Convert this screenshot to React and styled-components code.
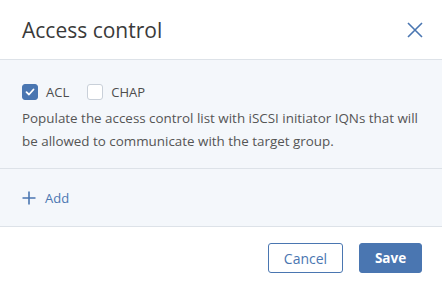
import React from "react";
import styled, { createGlobalStyle } from "styled-components";

const Global = createGlobalStyle`
  html, body { margin: 0; padding: 0; background: #fff; }
  body { font-family: "Open Sans", "Noto Sans", sans-serif; }
  * { box-sizing: border-box; }
`;

const Dialog = styled.div`
  width: 442px;
  height: 285px;
  display: flex;
  flex-direction: column;
  background: #fff;
  color: #4d4d4d;
`;

const Header = styled.div`
  height: 60px;
  display: flex;
  align-items: center;
  justify-content: space-between;
  padding: 0 19px 0 22px;
  border-bottom: 1px solid #dde2e8;
`;

const Title = styled.h1`
  margin: 0;
  font-size: 21px;
  font-weight: 400;
  color: #3a3a3a;
  line-height: 24px;
  margin-top: 1px;
`;

const CloseButton = styled.button`
  border: 0;
  background: none;
  padding: 0;
  width: 16px;
  height: 16px;
  display: flex;
  cursor: pointer;
`;

const Section = styled.div`
  background: #f4f7fb;
  border-bottom: 1px solid #dde2e8;
  padding: ${(p) => p.$pad};
`;

const CheckRow = styled.div`
  display: flex;
  align-items: center;
  gap: 18px;
  height: 16px;
`;

const CheckLabel = styled.label`
  display: flex;
  align-items: center;
  gap: 8px;
  font-size: 13px;
  color: #4d4d4d;
`;

const Box = styled.span`
  width: 16px;
  height: 16px;
  border-radius: 3px;
  display: flex;
  align-items: center;
  justify-content: center;
  background: ${(p) => (p.$checked ? "#4a76b1" : "#fff")};
  border: 1px solid ${(p) => (p.$checked ? "#4a76b1" : "#c9d0d9")};
`;

const Description = styled.p`
  margin: 7px 0 0;
  font-size: 13.4px;
  line-height: 23px;
  color: #555;
`;

const AddButton = styled.button`
  border: 0;
  background: none;
  padding: 0;
  display: flex;
  align-items: center;
  gap: 9px;
  font-family: inherit;
  font-size: 13px;
  color: #4a76b1;
  height: 57px;
`;

const Footer = styled.div`
  display: flex;
  justify-content: flex-end;
  gap: 16px;
  padding: 16px 20px 0;
`;

const Button = styled.button`
  height: 30px;
  width: ${(p) => p.$w}px;
  border-radius: 3px;
  font-family: inherit;
  font-size: ${(p) => (p.$primary ? 13.5 : 14)}px;
  font-weight: ${(p) => (p.$primary ? 700 : 400)};
  color: ${(p) => (p.$primary ? "#fff" : "#4a76b1")};
  background: ${(p) => (p.$primary ? "#4a76b1" : "#fff")};
  border: 1px solid #4a76b1;
  padding: 0;
  cursor: pointer;
`;

function Check({ checked, label }) {
  return (
    <CheckLabel>
      <Box $checked={checked}>
        {checked && (
          <svg width="10" height="8" viewBox="0 0 10 8">
            <path d="M1.5 4.2 L4 6.5 L8.5 1.5" fill="none" stroke="#fff" strokeWidth="1.8" strokeLinecap="round" strokeLinejoin="round" />
          </svg>
        )}
      </Box>
      {label}
    </CheckLabel>
  );
}

export default function App() {
  return (
    <>
      <Global />
      <Dialog>
        <Header>
          <Title>Access control</Title>
          <CloseButton aria-label="Close">
            <svg width="16" height="16" viewBox="0 0 16 16">
              <path d="M1 1 L15 15 M15 1 L1 15" stroke="#4a76b1" strokeWidth="1.6" fill="none" />
            </svg>
          </CloseButton>
        </Header>
        <Section $pad="24px 22px 15px">
          <CheckRow>
            <Check checked label="ACL" />
            <Check label="CHAP" />
          </CheckRow>
          <Description>
            Populate the access control list with iSCSI initiator IQNs that will be allowed to communicate with the target group.
          </Description>
        </Section>
        <Section $pad="0 22px">
          <AddButton>
            <svg width="14" height="14" viewBox="0 0 14 14">
              <path d="M7 0.5 V13.5 M0.5 7 H13.5" stroke="#4a76b1" strokeWidth="1.6" fill="none" />
            </svg>
            Add
          </AddButton>
        </Section>
        <Footer>
          <Button $w={75}>Cancel</Button>
          <Button $primary $w={63}>Save</Button>
        </Footer>
      </Dialog>
    </>
  );
}
